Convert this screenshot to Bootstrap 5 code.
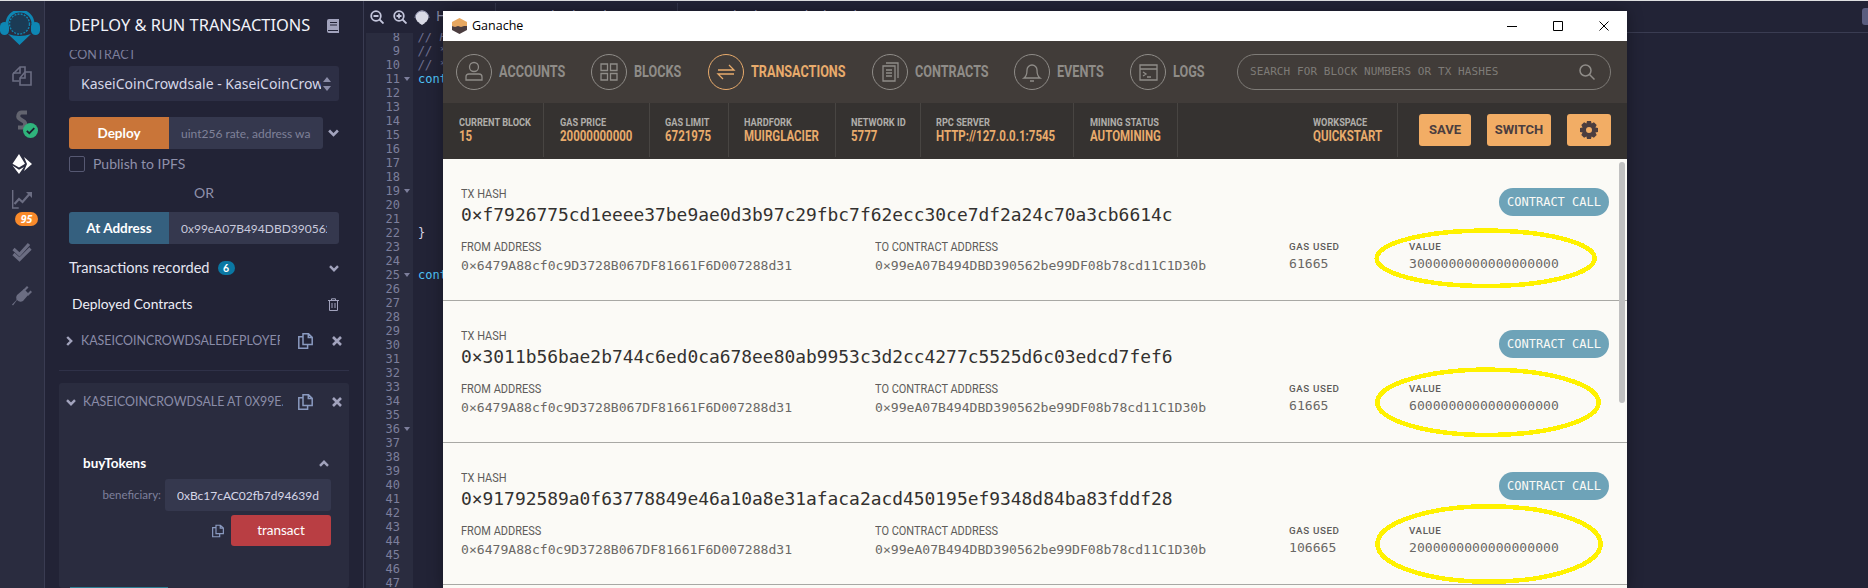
<!DOCTYPE html>
<html lang="en">
<head>
  <meta charset="UTF-8">
  <title>Remix - Ganache</title>
  <link href="https://cdn.jsdelivr.net/npm/bootstrap@5.3.3/dist/css/bootstrap.min.css" rel="stylesheet">
  <style>
    html, body { height: 588px; overflow: hidden; }
    body { background: #222336; font-family: "Noto Sans", sans-serif; position: relative; }
    .top-strip { height: 1px; background: #dfe0e2; }
    .ide { height: 587px; }
    .ic-soft { color: #a2a3bd; }
    .ic-copy { color: #8a9ac0; }

    /* icon rail */
    .rail { width: 45px; background: #2a2c3f; border-right: 1px solid #3a3c52; }
    .rail-logo { height: 53px; padding-top: 10px; }
    .rail-item { height: 44px; position: relative; }
    .rail-pill { position: absolute; left: 15px; top: 26px; width: 23px; height: 14px; border-radius: 7px; background: #f98a2b; color: #fff; font-size: 10.5px; font-weight: 700; font-style: italic; line-height: 14px; text-align: center; }
    .rail-ok { position: absolute; left: 23px; top: 25px; }

    /* deploy panel */
    .side { width: 319px; background: #222336; border-right: 1px solid #3a3c52; padding: 0 24px; overflow: hidden; color: #d5d6e8; font-family: Lato, sans-serif; }
    .side-head { height: 49px; }
    .side-title { font-family: "Noto Sans", sans-serif; font-size: 16.4px; color: #f2f3fa; }
    .ct-label { height: 12px; overflow: hidden; font-size: 12.5px; line-height: 14px; color: #7d7f9c; }
    .ct-label span { display: block; margin-top: -2px; }
    .ct-select.form-select { margin-top: 4px; height: 35px; padding: 0 18px 0 12px; border: 0; border-radius: 3px; background-color: #2d2f45; color: #d5d6e8; font-family: "Noto Sans", sans-serif; font-size: 14px; background-size: 8px 14px; background-position: right 8px center; background-image: url("data:image/svg+xml,%3Csvg xmlns='http://www.w3.org/2000/svg' viewBox='0 0 8 14'%3E%3Cpath fill='%238a8ca8' d='M4 0l4 5H0zM4 14L0 9h8z'/%3E%3C/svg%3E"); }
    .dep-group { margin-top: 16px; height: 32px; width: 270px; }
    .dep-group-addr { margin-top: 10px; }
    .dep-btn { width: 100px; height: 32px; padding: 0; border: 0; border-radius: 3px 0 0 3px; font-size: 13.5px; font-weight: 700; color: #fff; }
    .dep-orange, .dep-orange:hover { background: #c97539; color: #fff; }
    .dep-blue, .dep-blue:hover { background: #35607f; color: #fff; }
    .dep-input.form-control { height: 32px; padding: 0 12px; border: 0; border-radius: 0 3px 3px 0; background: #35384e; font-size: 12px; color: #c8c9dc; }
    .dep-input.form-control::placeholder { color: #7f8199; }
    .dep-chev { width: 16px; }
    .dep-check { margin-top: 7px; height: 16px; }
    .dep-check .form-check-input { width: 16px; height: 16px; margin: 0 8px 0 0; background-color: transparent; border: 1px solid #565872; border-radius: 2px; }
    .dep-check label { font-size: 14px; color: #8f90aa; line-height: 16px; }
    .or-text { margin-top: 11px; height: 19px; line-height: 19px; font-size: 14px; color: #8f90aa; }
    .rec-row { margin-top: 13px; height: 22px; font-size: 14.6px; color: #e5e6f2; }
    .rec-badge { width: 17px; height: 14px; margin-left: 8px; padding: 0; border-radius: 8px; background: #0a77a3; font-size: 10.5px; line-height: 14px; }
    .dc-row { margin-top: 14px; padding-left: 3px; height: 22px; font-size: 13.8px; color: #eeeff8; }
    .inst-row { height: 22px; }
    .inst-name { font-size: 12.4px; color: #8a8ca8; white-space: nowrap; overflow: hidden; flex: none; }
    .inst-one { margin: 15px 0 0 -3px; width: 276px; }
    .inst-one .inst-name { width: 199px; margin-left: 8px; }
    .inst-open .inst-name { width: 200px; margin-left: 7px; }
    .inst-copy { margin-left: 15px; flex: none; }
    .inst-one .inst-copy { margin-left: 18px; }
    .inst-x { margin-left: 19px; flex: none; }
    .inst-rule { height: 1px; background: #2f3148; margin: 18px -10px 12px -10px; }
    .inst-card { margin: 0 -10px; height: 205px; background: #2a2c3f; border-radius: 3px; padding: 8px 7px 0; position: relative; }
    .fn-title { margin-top: 39px; padding: 0 13px 0 17px; height: 22px; font-size: 13.5px; font-weight: 700; color: #fff; }
    .fn-up { transform: rotate(180deg); }
    .fn-args { margin-top: 5px; padding-right: 11px; }
    .fn-args label { font-size: 11.5px; color: #7e809c; margin-right: 4px; }
    .fn-input.form-control { width: 166px; height: 32px; flex: none; padding: 0 12px; border: 0; border-radius: 3px; background: #35384e; color: #d5d6e8; font-size: 12px; }
    .fn-go { margin-top: 4px; padding-right: 11px; }
    .fn-btn, .fn-btn:hover { width: 100px; height: 31px; padding: 0; margin-left: 7px; border: 0; border-radius: 3px; background: #b93e43; color: #fff; font-size: 13.5px; }
    .teal-bit { position: absolute; left: 11px; bottom: -2px; width: 98px; height: 3px; background: #2d7f93; }

    /* editor */
    .ed-main { min-width: 0; }
    .bar { height: 32px; padding-left: 6px; overflow: hidden; }
    .bar-ics svg { flex: none; }
    .bar-i2 { margin-left: 9px; }
    .bar-i3 { margin-left: 7px; }
    .bar-home { font-size: 14px; color: #8a8ca8; width: 65px; padding-left: 6px; flex: none; line-height: 30px; }
    .bar-tab { width: 182px; flex: none; height: 32px; margin-top: 2px; border-left: 1px solid #33354b; font-size: 14px; color: #9a9cb8; padding-left: 24px; line-height: 26px; }
    .bar-rest { border-bottom: 1px solid #3a3c52; }
    .corner-btn { position: absolute; right: 0; top: 8px; width: 6px; height: 17px; background: #5a5d7f; border-radius: 3px 0 0 3px; }
    .ed-body { height: 555px; overflow: hidden; }
    .gutter { width: 47px; margin-left: 2px; background: #2a2c3f; font-family: "DejaVu Sans Mono", monospace; font-size: 12px; color: #7d7f9c; overflow: hidden; }
    .g-inner { margin-top: -3px; }
    .g-line { height: 14px; line-height: 14px; padding-right: 13px; text-align: right; position: relative; }
    .g-line.fold::after { content: ""; position: absolute; right: 3px; top: 5px; border: 3px solid transparent; border-top: 4px solid #7d7f9c; border-bottom: 0; }
    .code { padding-left: 5px; font-family: "DejaVu Sans Mono", monospace; font-size: 12px; overflow: hidden; }
    .c-line { height: 14px; line-height: 14px; white-space: pre; }
    .c-cm { color: #6e7090; font-style: italic; }
    .c-kw { color: #4fc3f7; }
    .c-br { color: #d5d6e8; }

    /* ganache window */
    .gwin { position: absolute; left: 443px; top: 11px; width: 1184px; height: 577px; background: #fbfaf6; overflow: hidden; box-shadow: 0 0 14px rgba(0,0,0,.35); }
    .g-title { height: 30px; background: #fff; padding-left: 9px; font-family: "Open Sans", sans-serif; font-size: 12.5px; color: #000; }
    .g-title .name { margin-left: 5px; }
    .g-ctl { width: 46px; height: 30px; }
    .g-nav { height: 62px; background: #413c39; padding-left: 13px; }
    .g-navitem { flex: none; }
    .g-circ { width: 36px; height: 36px; border: 1px solid #8f8c88; border-radius: 50%; flex: none; color: #8f8c88; }
    .g-navlabel { margin-left: 7px; font-family: Roboto, sans-serif; font-weight: 700; font-size: 16px; color: #8f8c88; display: inline-block; white-space: nowrap; transform: scaleX(.79); transform-origin: left center; }
    .g-navitem.on .g-circ { border-color: #e8ab6c; color: #e8ab6c; }
    .g-navitem.on .g-navlabel { color: #e8ab6c; }
    .g-search { width: 374px; height: 36px; border: 1px solid #7e7b77; border-radius: 18px; padding: 0 15px 0 12px; font-family: "DejaVu Sans Mono", monospace; font-size: 11px; letter-spacing: .09px; color: #7e7b77; white-space: pre; }
    .g-stats { height: 56px; background: #353230; padding-bottom: 2px; font-family: Roboto, sans-serif; font-weight: 700; }
    .g-stat { height: 54px; margin-top: 0; padding: 13px 0 0 16px; border-right: 1px solid #484542; flex: none; }
    .g-lab, .g-val { transform-origin: left center; white-space: nowrap; }
    .g-lab { font-size: 11.5px; line-height: 13px; color: #b0aeaa; transform: scaleX(.8); }
    .g-val { font-size: 14px; line-height: 15px; color: #e8ab6c; transform: scaleX(.82); }
    .g-btn, .g-btn:hover { height: 32px; padding: 0; border: 0; border-radius: 3px; background: #f2ad65; color: #4b3d3f; font-family: Roboto, sans-serif; font-weight: 700; font-size: 13px; flex: none; }
    .g-save { width: 52px; margin-left: 21px; }
    .g-switch { width: 64px; margin-left: 16px; }
    .g-gear { width: 44px; margin-left: 16px; }

    .tx-row { height: 142px; padding: 28px 18px 0; border-bottom: 1px solid #a8a8a4; color: #6a6865; }
    .tx-lab { font-family: Roboto, sans-serif; font-size: 12.2px; line-height: 14px; color: #5e5c5a; transform: scaleX(.9); transform-origin: left center; white-space: nowrap; }
    .tx-hash { margin-top: 2px; font-family: "DejaVu Sans Mono", monospace; font-size: 17.92px; line-height: 24px; color: #33312f; }
    .tx-pill { margin-top: 1px; width: 110px; height: 28px; padding: 0; border-radius: 14px; background: #6ea3b8; color: #fbfaf6; font-family: "DejaVu Sans Mono", monospace; font-size: 12px; font-weight: 500; line-height: 28px; }
    .tx-cols { margin-top: 13px; }
    .tx-c1 { width: 414px; flex: none; }
    .tx-c2 { width: 120px; flex: none; }
    .tx-mono { margin-top: 5px; font-family: "DejaVu Sans Mono", monospace; font-size: 13.1px; line-height: 14px; color: #6a6865; }
    .tx-small { font-family: Roboto, sans-serif; font-size: 9.8px; letter-spacing: .6px; line-height: 14px; color: #5e5c5a; font-weight: 500; }
    .tx-short { margin-top: 3px; }
    .g-scroll { position: absolute; right: 2px; top: 151px; width: 6px; height: 241px; border-radius: 3px; background: #c1c1c1; }
    .marks { position: absolute; left: 0; top: 0; width: 1868px; height: 588px; pointer-events: none; }
  </style>
</head>
<body>
  <svg width="0" height="0" class="position-absolute">
    <symbol id="i-copy" viewBox="0 0 15 16"><path fill="none" stroke="currentColor" stroke-width="1.5" d="M5 .8h5.500l3.700 3.600v7H5zM10.300 1v3.500h3.800M5 3.800H.8v11.400h8.800v-3.600"/></symbol>
    <symbol id="i-x" viewBox="0 0 10 10"><path fill="none" stroke="currentColor" stroke-width="2.600" d="M1 1l8 8M9 1l-8 8"/></symbol>
    <symbol id="i-down" viewBox="0 0 10 7"><path fill="none" stroke="currentColor" stroke-width="2.400" d="M1 1.200l4 4 4-4"/></symbol>
  </svg>

  <div class="top-strip"></div>
  <div class="ide d-flex">

    <div class="rail flex-shrink-0">
      <div class="rail-logo">
        <svg width="40" height="35" viewBox="0 0 40 35">
          <path d="M7 13a12.500 12.500 0 0 1 26 0" fill="none" stroke="#0e86b3" stroke-width="3"/>
          <rect x="0" y="11" width="9" height="13" rx="4.500" fill="#0e86b3"/>
          <rect x="31" y="11" width="9" height="13" rx="4.500" fill="#0e86b3"/>
          <circle cx="19.500" cy="13" r="10" fill="#1b3b55" stroke="#0e86b3" stroke-width="1.400" stroke-dasharray="2 1.200"/>
          <path d="M8 23q11.500 4 23 0l-11.500 11z" fill="#0e86b3"/>
        </svg>
      </div>
      <div class="rail-item d-flex align-items-center justify-content-center">
        <svg width="20" height="20" viewBox="0 0 20 20" fill="none" stroke="#6b6d82" stroke-width="1.600"><path d="M13 6V1h-5L1 8v7h6"/><path d="M8 1v6H1"/><path d="M13 6h6v13H8V12z"/><path d="M13 6v6H8"/></svg>
      </div>
      <div class="rail-item d-flex align-items-center justify-content-center">
        <svg width="14" height="20" viewBox="0 0 14 20" fill="none" stroke="#62646f" stroke-width="4"><path d="M12 2.500H7a3.500 3.500 0 0 0-2 6.500l4 2.500a3.500 3.500 0 0 1-1.500 6H3"/></svg>
        <svg class="rail-ok" width="15" height="15" viewBox="0 0 15 15"><circle cx="7.500" cy="7.500" r="7.500" fill="#2fb47c"/><path d="M3.800 7.800l2.500 2.400 5-5" fill="none" stroke="#1d2030" stroke-width="1.700"/></svg>
      </div>
      <div class="rail-item d-flex align-items-center justify-content-center">
        <svg width="20" height="20" viewBox="0 0 20 20" fill="#fff"><path d="M7 0L.5 9.800 7 13.400l6-3.600zM.5 11.500L7 20l5-7-5 2.800z"/><path d="M12 3l8 7-8 7 3-7z"/></svg>
      </div>
      <div class="rail-item d-flex align-items-start justify-content-center">
        <svg class="mt-1" width="20" height="20" viewBox="0 0 20 20" fill="none" stroke="#6b6d82" stroke-width="1.400"><path d="M.7 0v18h6"/><path stroke-width="2.200" d="M2.500 14l4.500-5 3.500 3 7-8"/><path fill="#6b6d82" stroke="none" d="M14 2h6v6z"/></svg>
        <span class="rail-pill">95</span>
      </div>
      <div class="rail-item d-flex align-items-center justify-content-center">
        <svg width="20" height="20" viewBox="0 0 20 20" fill="none" stroke="#6b6d82" stroke-width="3.200"><path d="M1.500 7l6 5.500L17 2"/><path d="M1.500 12l6 5.500 11-11"/></svg>
      </div>
      <div class="rail-item d-flex align-items-center justify-content-center">
        <svg width="20" height="20" viewBox="0 0 20 20" fill="#6b6d82"><path d="M5 9l7-6 5 5-6 7a5 5 0 0 1-6-1L1 19.500 0 18.500 4.500 14A5 5 0 0 1 5 9z"/><path d="M11 4l4-4 1.500 1.500-4 4zM15 8l3.500-3.500L20 6l-4 4z"/></svg>
      </div>
    </div>

    <div class="side flex-shrink-0">
      <div class="side-head d-flex align-items-center justify-content-between">
        <span class="side-title text-nowrap">DEPLOY &amp; RUN TRANSACTIONS</span>
        <svg width="12" height="14" viewBox="0 0 12 14"><path fill="#a2a3bd" d="M2 0h10v14H2a2 2 0 0 1-2-2V2a2 2 0 0 1 2-2z"/><path stroke="#222336" d="M3 3.500h7M3 6h7M1 11.500h10"/></svg>
      </div>
      <div class="ct-label"><span>CONTRACT</span></div>
      <select class="ct-select form-select"><option>KaseiCoinCrowdsale - KaseiCoinCrowdsale.sol</option></select>

      <div class="dep-group d-flex">
        <button class="dep-btn dep-orange btn flex-shrink-0">Deploy</button>
        <input class="dep-input form-control" placeholder="uint256 rate, address wallet,">
        <span class="dep-chev d-flex align-items-center justify-content-end flex-shrink-0 ic-soft"><svg width="11" height="8"><use href="#i-down"/></svg></span>
      </div>
      <div class="dep-check d-flex align-items-center">
        <input class="form-check-input" type="checkbox" id="ipfs"><label for="ipfs">Publish to IPFS</label>
      </div>
      <div class="or-text text-center">OR</div>
      <div class="dep-group dep-group-addr d-flex">
        <button class="dep-btn dep-blue btn flex-shrink-0">At Address</button>
        <input class="dep-input form-control" value="0x99eA07B494DBD390562be99DF08b78cd11C1D30b">
      </div>

      <div class="rec-row d-flex align-items-center">
        <span>Transactions recorded</span>
        <span class="rec-badge badge">6</span>
        <svg class="ms-auto ic-soft" width="10" height="7"><use href="#i-down"/></svg>
      </div>
      <div class="dc-row d-flex align-items-center justify-content-between">
        <span>Deployed Contracts</span>
        <svg width="11" height="13" viewBox="0 0 11 13" fill="none" stroke="#a2a3bd"><path d="M0 2.500h11M3.500 2.500V.8h4v1.700M1.500 2.500v10h8v-10M4 5v5M7 5v5"/></svg>
      </div>

      <div class="inst-row inst-one d-flex align-items-center">
        <svg class="ic-soft flex-shrink-0" width="7" height="10" viewBox="0 0 7 10"><path fill="none" stroke="currentColor" stroke-width="2.400" d="M1.200 1l4 4-4 4"/></svg>
        <span class="inst-name">KASEICOINCROWDSALEDEPLOYER AT</span>
        <svg class="inst-copy ic-copy" width="15" height="16"><use href="#i-copy"/></svg>
        <svg class="inst-x ic-soft" width="10" height="10"><use href="#i-x"/></svg>
      </div>
      <div class="inst-rule"></div>
      <div class="inst-card">
        <div class="inst-row inst-open d-flex align-items-center">
          <svg class="ic-soft flex-shrink-0" width="10" height="7"><use href="#i-down"/></svg>
          <span class="inst-name">KASEICOINCROWDSALE AT 0X99E...1D30B</span>
          <svg class="inst-copy ic-copy" width="15" height="16"><use href="#i-copy"/></svg>
          <svg class="inst-x ic-soft" width="10" height="10"><use href="#i-x"/></svg>
        </div>
        <div class="fn-title d-flex align-items-center justify-content-between">
          <span>buyTokens</span>
          <svg class="fn-up ic-soft" width="10" height="7"><use href="#i-down"/></svg>
        </div>
        <div class="fn-args d-flex align-items-center justify-content-end">
          <label>beneficiary:</label>
          <input class="fn-input form-control" value="0xBc17cAC02fb7d94639d82BlABC">
        </div>
        <div class="fn-go d-flex align-items-center justify-content-end">
          <svg class="ic-copy" width="12" height="16"><use href="#i-copy"/></svg>
          <button class="fn-btn btn">transact</button>
        </div>
        <div class="teal-bit"></div>
      </div>
    </div>

    <div class="ed-main flex-grow-1 d-flex flex-column">
      <div class="bar d-flex">
        <div class="bar-ics d-flex align-items-center flex-shrink-0">
          <svg width="14" height="14" viewBox="0 0 14 14" fill="none" stroke="#c4c6dc" stroke-width="1.800"><circle cx="6" cy="6" r="4.800"/><path d="M9.500 9.500L13.500 13.500M3.500 6h5"/></svg>
          <svg class="bar-i2" width="14" height="14" viewBox="0 0 14 14" fill="none" stroke="#c4c6dc" stroke-width="1.800"><circle cx="6" cy="6" r="4.800"/><path d="M9.500 9.500L13.500 13.500M3.500 6h5M6 3.500v5"/></svg>
          <svg class="bar-i3" width="16" height="16" viewBox="0 0 16 16"><circle cx="8" cy="8" r="6.500" fill="#d9dae6"/><path d="M1 9a7 7 0 0 1 14 0" fill="none" stroke="#8a8ca8"/><path d="M5 14h6l-3 2z" fill="#d9dae6"/></svg>
        </div>
        <div class="bar-home">Home</div>
        <div class="bar-tab">KaseiCoin.sol</div>
        <div class="bar-tab">KaseiCoinCrowdsale.sol</div>
        <div class="bar-rest flex-grow-1"></div>
      </div>
      <div class="ed-body d-flex">
        <div class="gutter flex-shrink-0"><div class="g-inner" id="gutter"></div></div>
        <div class="code flex-grow-1"><div class="g-inner" id="code"></div></div>
      </div>
    </div>
  </div>
  <div class="corner-btn"></div>

  <div class="gwin">
    <div class="g-title d-flex align-items-center">
      <svg width="15" height="16" viewBox="0 0 15 16"><path fill="#e8a860" d="M7.500 0L15 4v4l-7.500 4L0 8V4z"/><path fill="#4b3d3f" d="M0 8l3 1 3-1 3 1 3-1 3 0v4l-7.500 4L0 12z"/></svg>
      <span class="name">Ganache</span>
      <div class="ms-auto d-flex">
        <div class="g-ctl d-flex align-items-center justify-content-center"><svg width="10" height="10"><path stroke="#000" d="M0 5.500h10"/></svg></div>
        <div class="g-ctl d-flex align-items-center justify-content-center"><svg width="10" height="10"><path fill="none" stroke="#000" d="M.5.500h9v9h-9z"/></svg></div>
        <div class="g-ctl d-flex align-items-center justify-content-center"><svg width="10" height="10"><path stroke="#000" d="M.5.500l9 9M9.500.500l-9 9"/></svg></div>
      </div>
    </div>

    <div class="g-nav d-flex align-items-center" id="gnav"></div>

    <div class="g-stats d-flex align-items-center">
      <div id="gstats" class="d-flex align-self-start"></div>
      <button class="g-btn g-save btn">SAVE</button>
      <button class="g-btn g-switch btn">SWITCH</button>
      <button class="g-btn g-gear btn d-flex align-items-center justify-content-center">
        <svg width="18" height="18" viewBox="0 0 18 18"><path fill="#4b3d3f" fill-rule="evenodd" d="M7 0h4l.6 2.600 2.300-1.300 2.800 2.800-1.300 2.300L18 7v4l-2.600.6 1.300 2.300-2.800 2.800-2.300-1.300L11 18H7l-.6-2.600-2.300 1.300-2.800-2.800 1.300-2.300L0 11V7l2.600-.6-1.300-2.300 2.800-2.800 2.300 1.300zM9 6a3 3 0 1 0 0 6 3 3 0 0 0 0-6z"/></svg>
      </button>
    </div>

    <div id="txs"></div>
    <div class="g-scroll"></div>
  </div>

  <svg class="marks" viewBox="0 0 1868 588" shape-rendering="crispEdges" fill="none" stroke="#fff200" stroke-width="4.500">
    <ellipse cx="1485.700" cy="258.300" rx="109" ry="27.700"/>
    <ellipse cx="1488" cy="402.300" rx="110.700" ry="32.700"/>
    <ellipse cx="1489" cy="544" rx="111.600" ry="37.700"/>
  </svg>

  <script src="https://cdn.jsdelivr.net/npm/bootstrap@5.3.3/dist/js/bootstrap.bundle.min.js"></script>
  <script>
    // line numbers and the bits of code that show left of the window
    const folds = [11, 19, 25, 36];
    const code = { 8: '<span class="c-cm">// H</span>', 9: '<span class="c-cm">// *</span>', 10: '<span class="c-cm">// *</span>', 11: '<span class="c-kw">contract</span>', 22: '<span class="c-br">}</span>', 25: '<span class="c-kw">contract</span>' };
    let gutterHtml = '', codeHtml = '';
    for (let n = 8; n <= 47; n++) {
      gutterHtml += `<div class="g-line${folds.includes(n) ? ' fold' : ''}">${n}</div>`;
      codeHtml += `<div class="c-line">${code[n] || ' '}</div>`;
    }
    document.getElementById('gutter').innerHTML = gutterHtml;
    document.getElementById('code').innerHTML = codeHtml;

    // ganache nav
    const ic = 'fill="none" stroke="currentColor" stroke-width="1.3"';
    const nav = [
      ['ACCOUNTS', 135, `<circle cx="12" cy="7" r="4.500"/><path d="M4 20h16v-3q0-3-3-3H7q-3 0-3 3z"/>`],
      ['BLOCKS', 117, `<path d="M4 4h6.500v6.500H4zM13.500 4H20v6.500h-6.500zM4 13.500h6.500V20H4zM13.500 13.500H20V20h-6.500z"/>`],
      ['TRANSACTIONS', 164, `<path d="M4 10h16l-5-5M20 14H4l5 5"/>`],
      ['CONTRACTS', 142, `<path d="M5 6h12v15H5zM8 3h12v15M8 10h6M8 13h6M8 16h6"/>`],
      ['EVENTS', 116, `<path d="M4 18q3-2 3-8a5 5 0 0 1 10 0q0 6 3 8zM10 21h4"/>`],
      ['LOGS', 107, `<path d="M4 5h17v15H4zM4 9h17M7 12l3 2-3 2M11 17h4"/>`]
    ];
    document.getElementById('gnav').innerHTML = nav.map(n => `
      <div class="g-navitem d-flex align-items-center ${n[0] === 'TRANSACTIONS' ? 'on' : ''}" style="width:${n[1]}px">
        <span class="g-circ d-flex align-items-center justify-content-center">
          <svg width="24" height="24" viewBox="0 0 24 24" ${ic}>${n[2]}</svg>
        </span>
        <span class="g-navlabel">${n[0]}</span>
      </div>`).join('') + `
      <div class="g-search d-flex align-items-center justify-content-between flex-shrink-0">
        <span>SEARCH FOR BLOCK NUMBERS OR TX HASHES</span>
        <svg width="16" height="16" viewBox="0 0 16 16" fill="none" stroke="#8f8c88" stroke-width="1.500"><circle cx="6.500" cy="6.500" r="5.500"/><path d="M10.500 10.500L15.500 15.500"/></svg>
      </div>`;

    // status strip
    const stats = [
      ['CURRENT BLOCK', '15', 101, 16], ['GAS PRICE', '20000000000', 106, 16], ['GAS LIMIT', '6721975', 79, 15],
      ['HARDFORK', 'MUIRGLACIER', 107, 15], ['NETWORK ID', '5777', 85, 15], ['RPC SERVER', 'HTTP://127.0.0.1:7545', 153, 15],
      ['MINING STATUS', 'AUTOMINING', 104, 16], ['WORKSPACE', 'QUICKSTART', 220, 135]
    ];
    document.getElementById('gstats').innerHTML = stats.map(s => `
      <div class="g-stat" style="width:${s[2]}px;padding-left:${s[3]}px"><div class="g-lab">${s[0]}</div><div class="g-val">${s[1]}</div></div>`).join('');

    // transactions
    const txs = [
      ['0×f7926775cd1eeee37be9ae0d3b97c29fbc7f62ecc30ce7df2a24c70a3cb6614c', '61665', '3000000000000000000'],
      ['0×3011b56bae2b744c6ed0ca678ee80ab9953c3d2cc4277c5525d6c03edcd7fef6', '61665', '6000000000000000000'],
      ['0×91792589a0f63778849e46a10a8e31afaca2acd450195ef9348d84ba83fddf28', '106665', '2000000000000000000']
    ];
    document.getElementById('txs').innerHTML = txs.map(t => `
      <div class="tx-row">
        <div class="d-flex justify-content-between align-items-start">
          <div><div class="tx-lab">TX HASH</div><div class="tx-hash">${t[0]}</div></div>
          <span class="tx-pill badge">CONTRACT CALL</span>
        </div>
        <div class="tx-cols d-flex">
          <div class="tx-c1"><div class="tx-lab">FROM ADDRESS</div><div class="tx-mono">0×6479A88cf0c9D3728B067DF81661F6D007288d31</div></div>
          <div class="tx-c1"><div class="tx-lab">TO CONTRACT ADDRESS</div><div class="tx-mono">0×99eA07B494DBD390562be99DF08b78cd11C1D30b</div></div>
          <div class="tx-c2"><div class="tx-small">GAS USED</div><div class="tx-mono tx-short">${t[1]}</div></div>
          <div><div class="tx-small">VALUE</div><div class="tx-mono tx-short">${t[2]}</div></div>
        </div>
      </div>`).join('');
  </script>
</body>
</html>
